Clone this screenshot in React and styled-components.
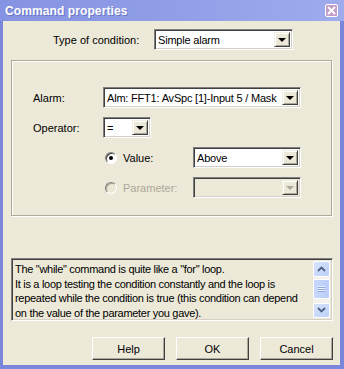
import React from "react";
import styled, { createGlobalStyle } from "styled-components";

const Global = createGlobalStyle`
  html, body { margin: 0; padding: 0; background: #ffffff; }
  body { font-family: "Liberation Sans", Arial, sans-serif; font-size: 11px; }
  * { box-sizing: border-box; }
`;

const Window = styled.div`
  width: 344px;
  height: 369px;
  background: #7a86dc;
  padding: 0 4px 4px 3px;
  display: flex;
  flex-direction: column;
`;

const TitleBar = styled.div`
  height: 21px;
  margin: 0 -4px 0 -3px;
  padding: 0 6px 0 5px;
  display: flex;
  align-items: center;
  justify-content: space-between;
  background: linear-gradient(90deg, #8593e2 0%, #93a1e8 60%, #9eabed 100%);
`;

const Title = styled.span`
  color: #ffffff;
  font-weight: bold;
  font-size: 12px;
  letter-spacing: 0.1px;
  text-shadow: 1px 1px 0 #6a76c8;
`;

const CloseBtn = styled.div`
  width: 13px;
  height: 13px;
  border: 1px solid #ffffff;
  border-radius: 2px;
  background: #c09ec8;
  display: flex;
  align-items: center;
  justify-content: center;
`;

const Client = styled.div`
  flex: 1;
  background: #ece9d8;
  display: flex;
  flex-direction: column;
  padding: 8px 0 5px 8px;
`;

const TypeRow = styled.div`
  display: flex;
  align-items: center;
  padding-left: 42px;
  height: 21px;
`;

const Label = styled.span`
  width: ${(p) => p.$w || "auto"};
  color: ${(p) => (p.$disabled ? "#aca899" : "#000000")};
  white-space: nowrap;
`;

const ComboBox = styled.div`
  width: ${(p) => p.$w}px;
  height: 21px;
  display: flex;
  align-items: stretch;
  background: ${(p) => (p.$disabled ? "#ece9d8" : "#ffffff")};
  border-top: 1px solid #808080;
  border-left: 1px solid #808080;
  border-right: 1px solid #ffffff;
  border-bottom: 1px solid #ffffff;
  box-shadow: inset 1px 1px 0 #404040, inset -1px -1px 0 #d4d0c8;
  padding: 2px;
`;

const ComboText = styled.span`
  flex: 1;
  padding-left: 1px;
  display: flex;
  align-items: center;
  overflow: hidden;
  white-space: nowrap;
  letter-spacing: -0.2px;
  color: #000;
`;

const ArrowBtn = styled.div`
  width: 16px;
  flex-shrink: 0;
  background: #ece9d8;
  border-top: 1px solid #f1efe2;
  border-left: 1px solid #f1efe2;
  border-right: 1px solid #404040;
  border-bottom: 1px solid #404040;
  box-shadow: inset 1px 1px 0 #ffffff, inset -1px -1px 0 #aca899;
  display: flex;
  align-items: center;
  justify-content: center;
`;

const Tri = styled.div`
  width: 0;
  height: 0;
  border-left: 4px solid transparent;
  border-right: 4px solid transparent;
  border-top: 4px solid ${(p) => (p.$disabled ? "#aca899" : "#000000")};
`;

const Combo = ({ w, text, disabled }) => (
  <ComboBox $w={w} $disabled={disabled}>
    <ComboText>{text}</ComboText>
    <ArrowBtn>
      <Tri $disabled={disabled} />
    </ArrowBtn>
  </ComboBox>
);

const GroupBox = styled.div`
  margin-top: 10px;
  width: 321px;
  height: 156px;
  border: 1px solid #aca899;
  box-shadow: 1px 1px 0 #ffffff, inset 1px 1px 0 #ffffff;
  padding: 26px 0 0 21px;
  display: grid;
  grid-template-columns: 70px auto;
  grid-auto-rows: 21px;
  row-gap: 9px;
  align-items: center;
`;

const SubRow = styled.div`
  display: flex;
  align-items: center;
`;

const Radio = styled.span`
  width: 12px;
  height: 12px;
  border-radius: 50%;
  margin: 0 6px 0 2px;
  background: ${(p) => (p.$disabled ? "#ece9d8" : "#ffffff")};
  border: 1px solid;
  border-color: #808080 #ffffff #ffffff #808080;
  box-shadow: inset 1px 1px 0 ${(p) => (p.$disabled ? "#aca899" : "#404040")};
  display: flex;
  align-items: center;
  justify-content: center;
  &::after {
    content: "";
    width: 4px;
    height: 4px;
    border-radius: 50%;
    background: #000;
    display: ${(p) => (p.$checked ? "block" : "none")};
  }
`;

const TextArea = styled.div`
  margin-top: 42px;
  width: 322px;
  height: 63px;
  background: #ece9d8;
  border-top: 1px solid #808080;
  border-left: 1px solid #808080;
  border-right: 1px solid #ffffff;
  border-bottom: 1px solid #ffffff;
  box-shadow: inset 1px 1px 0 #404040, inset -1px -1px 0 #d4d0c8;
  padding: 2px;
  display: flex;
`;

const Text = styled.div`
  flex: 1;
  padding: 1px 2px 0 1px;
  line-height: 14.5px;
  letter-spacing: -0.3px;
  color: #000;
`;

const ScrollBar = styled.div`
  width: 17px;
  display: flex;
  flex-direction: column;
  background: #f4f3ee;
`;

const ScrollBtn = styled.div`
  height: 17px;
  border-radius: 2px;
  border: 1px solid #ffffff;
  background: linear-gradient(135deg, #d8e3fc 0%, #bcd0f7 100%);
  display: flex;
  align-items: center;
  justify-content: center;
`;

const Track = styled.div`
  flex: 1;
  display: flex;
  flex-direction: column;
  padding: 2px 0 4px;
`;

const Thumb = styled.div`
  height: 20px;
  border-radius: 2px;
  border: 1px solid #ffffff;
  background: linear-gradient(90deg, #c9d8fb 0%, #bacdf8 100%);
  display: flex;
  flex-direction: column;
  align-items: center;
  justify-content: center;
  gap: 1px;
`;

const Grip = styled.span`
  width: 7px;
  height: 1px;
  background: #eef3ff;
  box-shadow: 0 1px 0 #8ca6e0;
`;

const ButtonRow = styled.div`
  margin-top: auto;
  display: flex;
  justify-content: flex-end;
  gap: 11px;
  padding-right: 7px;
`;

const Button = styled.div`
  width: 73px;
  height: 23px;
  background: #ece9d8;
  border-top: 1px solid #ffffff;
  border-left: 1px solid #ffffff;
  border-right: 1px solid #404040;
  border-bottom: 1px solid #404040;
  box-shadow: inset -1px -1px 0 #aca899;
  display: flex;
  align-items: center;
  justify-content: center;
  color: #000;
`;

const Chevron = ({ up }) => (
  <svg width="9" height="6" viewBox="0 0 9 6">
    <path
      d={up ? "M1 5 L4.5 1.5 L8 5" : "M1 1 L4.5 4.5 L8 1"}
      fill="none"
      stroke="#4d6185"
      strokeWidth="1.8"
    />
  </svg>
);

export default function App() {
  return (
    <>
      <Global />
      <Window>
        <TitleBar>
          <Title>Command properties</Title>
          <CloseBtn>
            <svg width="9" height="9" viewBox="0 0 9 9">
              <path d="M1 1 L8 8 M8 1 L1 8" stroke="#ffffff" strokeWidth="1.8" />
            </svg>
          </CloseBtn>
        </TitleBar>
        <Client>
          <TypeRow>
            <Label $w="101px">Type of condition:</Label>
            <Combo w={139} text="Simple alarm" />
          </TypeRow>
          <GroupBox>
            <Label>Alarm:</Label>
            <Combo w={198} text="Alm: FFT1: AvSpc [1]-Input 5 / Mask" />
            <Label>Operator:</Label>
            <Combo w={48} text="=" />
            <span />
            <SubRow>
              <Radio $checked />
              <Label $w="70px">Value:</Label>
              <Combo w={108} text="Above" />
            </SubRow>
            <span />
            <SubRow>
              <Radio $disabled />
              <Label $w="70px" $disabled>
                Parameter:
              </Label>
              <Combo w={108} text="" disabled />
            </SubRow>
          </GroupBox>
          <TextArea>
            <Text>
              The "while" command is quite like a "for" loop.
              <br />
              It is a loop testing the condition constantly and the loop is repeated while the
              condition is true (this condition can depend on the value of the parameter you gave).
            </Text>
            <ScrollBar>
              <ScrollBtn>
                <Chevron up />
              </ScrollBtn>
              <Track>
                <Thumb>
                  <Grip />
                  <Grip />
                  <Grip />
                </Thumb>
              </Track>
              <ScrollBtn>
                <Chevron />
              </ScrollBtn>
            </ScrollBar>
          </TextArea>
          <ButtonRow>
            <Button>Help</Button>
            <Button>OK</Button>
            <Button>Cancel</Button>
          </ButtonRow>
        </Client>
      </Window>
    </>
  );
}
